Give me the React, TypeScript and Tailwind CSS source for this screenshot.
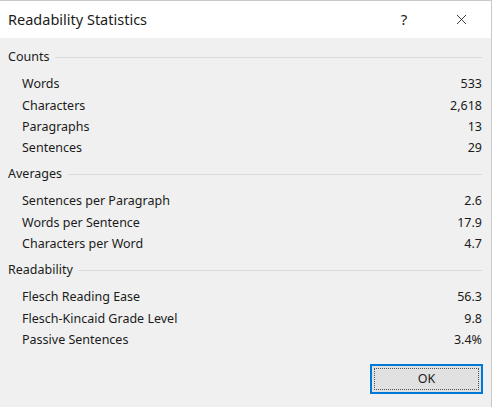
import { X } from 'lucide-react';

const sections = [
  {
    title: 'Counts',
    rows: [
      ['Words', '533'],
      ['Characters', '2,618'],
      ['Paragraphs', '13'],
      ['Sentences', '29'],
    ],
  },
  {
    title: 'Averages',
    rows: [
      ['Sentences per Paragraph', '2.6'],
      ['Words per Sentence', '17.9'],
      ['Characters per Word', '4.7'],
    ],
  },
  {
    title: 'Readability',
    rows: [
      ['Flesch Reading Ease', '56.3'],
      ['Flesch-Kincaid Grade Level', '9.8'],
      ['Passive Sentences', '3.4%'],
    ],
  },
];

export default function App() {
  return (
    <div
      className="w-[492px] h-[407px] flex flex-col bg-[#f0f0f0] border-t border-[#c8c8c8] border-r text-[#1b1b1b]"
      style={{ fontFamily: "'Noto Sans', 'Open Sans', sans-serif" }}
    >
      {/* Title bar */}
      <div className="h-[37px] bg-white flex items-center shrink-0">
        <span className="pl-[8px] text-[14.5px] flex-1">Readability Statistics</span>
        <span className="w-[16px] text-center text-[15px] mr-[41px]">?</span>
        <X className="w-[17px] h-[17px] mr-[21px]" strokeWidth={1.2} />
      </div>

      {/* Body */}
      <div className="flex-1 flex flex-col pt-[9px] pl-[8px] pr-[9px] text-[12.5px]">
        {sections.map((s) => (
          <div key={s.title} className="mb-[5px]">
            <div className="h-[20px] flex items-center gap-[6px]">
              <span>{s.title}</span>
              <div className="flex-1 h-px bg-[#dadada]" />
            </div>
            <div className="mt-[7px]">
              {s.rows.map(([label, value]) => (
                <div key={label} className="h-[21.3px] flex items-center justify-between pl-[14px]">
                  <span>{label}</span>
                  <span>{value}</span>
                </div>
              ))}
            </div>
          </div>
        ))}

        <div className="flex justify-end mt-[8px]">
          <button className="w-[113px] h-[30px] border-2 border-[#0078d7] bg-[#e1e1e1] p-[2px] mr-[-1px]">
            <div className="w-full h-full border border-dotted border-[#555] flex items-center justify-center text-[12.5px]">
              OK
            </div>
          </button>
        </div>
      </div>
    </div>
  );
}
